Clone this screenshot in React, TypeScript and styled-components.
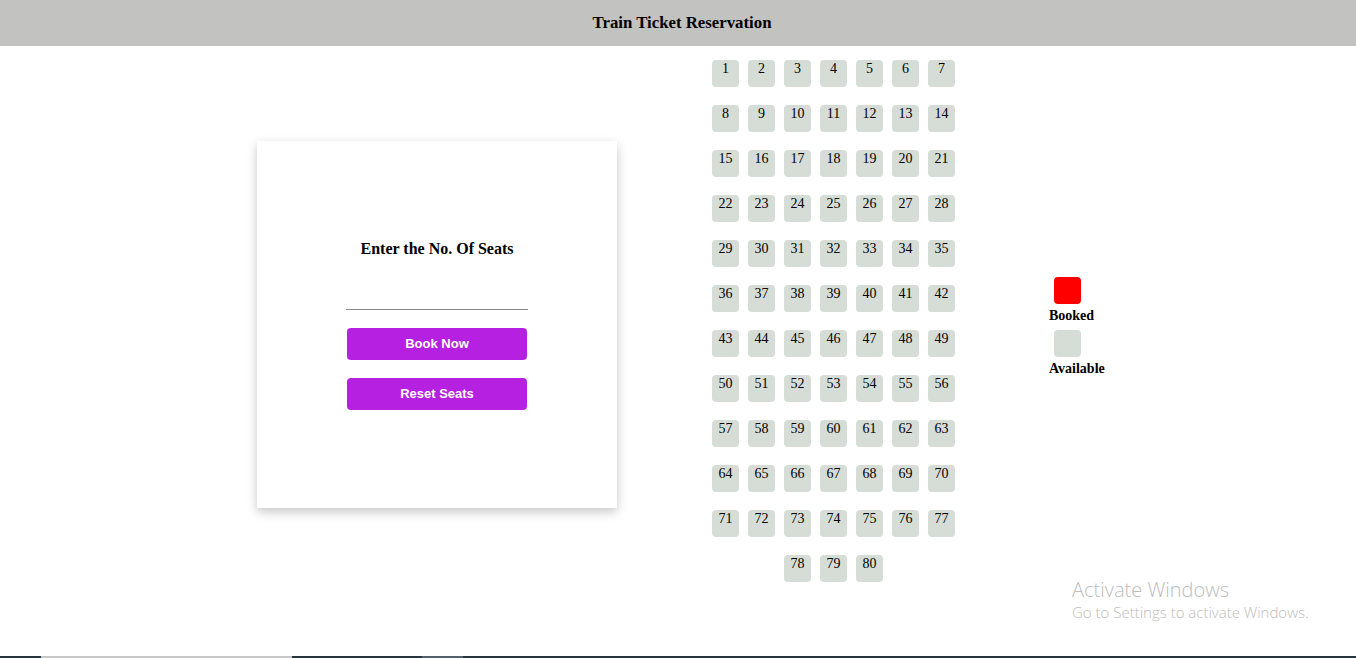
import React from "react";
import styled, { createGlobalStyle } from "styled-components";

const Global = createGlobalStyle`
  html, body { margin: 0; padding: 0; background: #ffffff; }
  body { font-family: "Liberation Serif", "Times New Roman", serif; }
  * { box-sizing: border-box; }
`;

const Page = styled.div`
  height: 658px;
  display: flex;
  flex-direction: column;
  overflow: hidden;
  position: relative;
`;

const Header = styled.header`
  height: 46px;
  background: #c2c2c0;
  display: flex;
  align-items: center;
  justify-content: center;
  padding-left: 8px;
  flex-shrink: 0;
`;

const Title = styled.h1`
  margin: 0;
  font-size: 16.8px;
  font-weight: bold;
  color: #000;
`;

const Main = styled.main`
  flex: 1;
  display: flex;
  align-items: flex-start;
  padding: 14px 0 0 257px;
`;

const Card = styled.section`
  width: 360px;
  height: 367px;
  margin-top: 81px;
  margin-right: 95px;
  background: #fff;
  box-shadow: 0 4px 10px rgba(0, 0, 0, 0.22);
  display: flex;
  flex-direction: column;
  align-items: center;
  justify-content: center;
`;

const CardTitle = styled.h3`
  margin: 0 0 32px;
  font-size: 16px;
  line-height: 18px;
  font-weight: bold;
  color: #000;
`;

const SeatInput = styled.input`
  width: 182px;
  height: 20px;
  border: none;
  border-bottom: 1px solid #8a8a8a;
  outline: none;
  background: transparent;
  margin: 0 0 18px;
  font-size: 14px;
`;

const ActionButton = styled.button<{ $last?: boolean }>`
  width: 180px;
  height: 32px;
  border: none;
  border-radius: 4px;
  background: #b620e0;
  color: #fff;
  font-family: "Liberation Sans", Arial, sans-serif;
  font-weight: bold;
  font-size: 13px;
  margin-bottom: ${(p) => (p.$last ? "0" : "18px")};
  cursor: pointer;
`;

const SeatGrid = styled.div`
  width: 243px;
  margin-right: 94px;
  display: flex;
  flex-wrap: wrap;
  justify-content: center;
  column-gap: 9px;
  row-gap: 18px;
`;

const Seat = styled.div<{ $booked?: boolean }>`
  width: 27px;
  height: 27px;
  border-radius: 4px;
  background: ${(p) => (p.$booked ? "#ff0000" : "#d6ddd7")};
  color: #000;
  font-size: 14px;
  line-height: 16px;
  padding-top: 1px;
  text-align: center;
`;

const Legend = styled.aside`
  margin-top: 217px;
  display: flex;
  flex-direction: column;
`;

const LegendBox = styled.div<{ $color: string }>`
  width: 27px;
  height: 27px;
  border-radius: 4px;
  margin-left: 5px;
  background: ${(p) => p.$color};
`;

const LegendLabel = styled.div<{ $last?: boolean }>`
  font-size: 14px;
  line-height: 16px;
  font-weight: bold;
  color: #000;
  margin: 4px 0 ${(p) => (p.$last ? "0" : "6px")};
`;

const Taskbar = styled.div`
  height: 2px;
  flex-shrink: 0;
  display: flex;
  background: #26343e;
`;

const TaskSeg = styled.div<{ $w: number; $c: string }>`
  width: ${(p) => p.$w}px;
  background: ${(p) => p.$c};
`;

const Watermark = styled.div`
  position: absolute;
  left: 1072px;
  top: 578px;
  font-family: "Open Sans", "Noto Sans", sans-serif;
  font-weight: 300;
  color: #bdbdbd;
  pointer-events: none;
`;

const WmTitle = styled.div`
  font-size: 20px;
  line-height: 24px;
`;

const WmSub = styled.div`
  font-size: 15px;
  line-height: 20px;
`;

export default function App() {
  const seats = Array.from({ length: 80 }, (_, i) => i + 1);
  return (
    <Page>
      <Global />
      <Header>
        <Title>Train Ticket Reservation</Title>
      </Header>
      <Main>
        <Card>
          <CardTitle>Enter the No. Of Seats</CardTitle>
          <SeatInput type="number" />
          <ActionButton>Book Now</ActionButton>
          <ActionButton $last>Reset Seats</ActionButton>
        </Card>
        <SeatGrid>
          {seats.map((n) => (
            <Seat key={n}>{n}</Seat>
          ))}
        </SeatGrid>
        <Legend>
          <LegendBox $color="#ff0000" />
          <LegendLabel>Booked</LegendLabel>
          <LegendBox $color="#d6ddd7" />
          <LegendLabel $last>Available</LegendLabel>
        </Legend>
      </Main>
      <Taskbar>
        <TaskSeg $w={41} $c="#26343e" />
        <TaskSeg $w={251} $c="#c8c8c8" />
        <TaskSeg $w={130} $c="#26343e" />
        <TaskSeg $w={41} $c="#52616b" />
      </Taskbar>
      <Watermark>
        <WmTitle>Activate Windows</WmTitle>
        <WmSub>Go to Settings to activate Windows.</WmSub>
      </Watermark>
    </Page>
  );
}
